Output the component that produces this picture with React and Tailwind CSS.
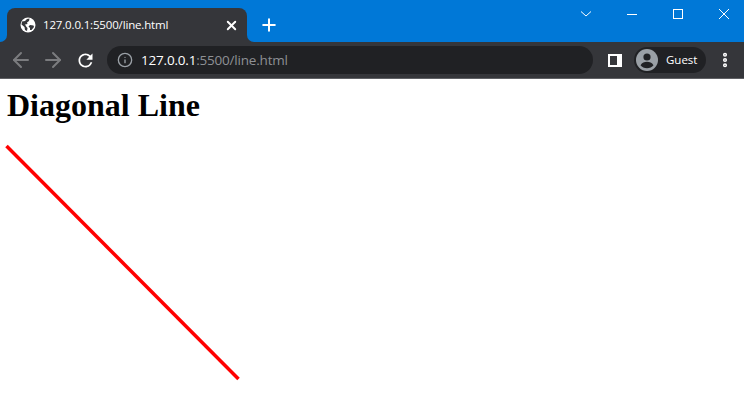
import React from "react";
import { ArrowLeft, ArrowRight, Info, Plus, X, EllipsisVertical } from "lucide-react";

const GlobeIcon = () => (
  <svg width="16" height="16" viewBox="0 0 16 16">
    <circle cx="8" cy="8" r="7.5" fill="#fff" />
    <path d="M2 4.5 L5 4 L7 2 L9.5 1.5 L9 4 L7 5.5 L7.5 7 L5 7.5 L6.5 10 L7.5 11 L7 14 L5 13 L4.5 10 L1.5 7.5 Z M10 8 L13.5 8.5 L14 10 L11.5 13 L10 13 L10 11 L8.5 9.5 Z" fill="#35363a" />
  </svg>
);

const ReloadIcon = () => (
  <svg className="ml-[10px]" width="21" height="21" viewBox="0 0 24 24" fill="#fff">
    <path d="M17.65 6.35A7.958 7.958 0 0 0 12 4c-4.42 0-7.99 3.58-7.99 8s3.57 8 7.99 8c3.73 0 6.84-2.55 7.73-6h-2.08A5.99 5.99 0 0 1 12 18c-3.31 0-6-2.69-6-6s2.69-6 6-6c1.66 0 3.14.69 4.22 1.78L13 11h7V4l-2.35 2.35z" />
  </svg>
);

const GuestAvatar = () => (
  <svg width="22" height="22" viewBox="0 0 22 22">
    <circle cx="11" cy="11" r="11" fill="#9aa0a6" />
    <circle cx="11" cy="8" r="3.6" fill="#202124" />
    <path d="M4.5 16.2 C6 13.4 8.5 12.8 11 12.8 C13.5 12.8 16 13.4 17.5 16.2 C16 18.2 13.6 19.2 11 19.2 C8.4 19.2 6 18.2 4.5 16.2 Z" fill="#202124" />
  </svg>
);

// window buttons, 46px wide like the real caption bar
const CaptionButton = ({ children }) => (
  <div className="w-[46px] h-[28px] flex items-center justify-center">
    <svg width="12" height="12" viewBox="0 0 12 12" fill="none" stroke="#fff" strokeWidth="1">
      {children}
    </svg>
  </div>
);

const App = () => {
  return (
    <div className="w-[744px] h-[419px] overflow-hidden bg-white font-['Roboto','Liberation_Sans',sans-serif]">
      {/* Tab strip */}
      <div className="h-[42px] bg-[#0078d7] flex items-end pl-[7px]">
        <div className="relative w-[240px] h-[34px] bg-[#35363a] rounded-t-lg flex items-center pl-[13px] pr-[8px]">
          {/* flared tab corners */}
          <div className="absolute -left-[7px] bottom-0 w-[7px] h-[7px] bg-[#35363a]">
            <div className="w-full h-full bg-[#0078d7] rounded-br-[7px]" />
          </div>
          <div className="absolute -right-[7px] bottom-0 w-[7px] h-[7px] bg-[#35363a]">
            <div className="w-full h-full bg-[#0078d7] rounded-bl-[7px]" />
          </div>
          <GlobeIcon />
          <span className="ml-[7px] text-[11.5px] text-white whitespace-nowrap font-['Open_Sans',sans-serif] tracking-[-0.16px]">127.0.0.1:5500/line.html</span>
          <X className="ml-auto text-white" size={15} strokeWidth={3} />
        </div>
        <div className="self-center mt-[8px] ml-[12px]">
          <Plus className="text-white" size={20} strokeWidth={2.4} />
        </div>
        <div className="ml-auto mr-[-3px] self-start flex items-center">
          <CaptionButton>
            <path d="M1 3.5 L6 8 L11 3.5" />
          </CaptionButton>
          <CaptionButton>
            <path d="M1 6.5 H11" />
          </CaptionButton>
          <CaptionButton>
            <rect x="1.5" y="1.5" width="9" height="9" />
          </CaptionButton>
          <CaptionButton>
            <path d="M1 1 L11 11 M11 1 L1 11" />
          </CaptionButton>
        </div>
      </div>

      {/* Toolbar */}
      <div className="h-[37px] bg-[#35363a] border-b border-[#5f6064] flex items-center pl-[9px]">
        <ArrowLeft className="text-[#7b7c7f]" size={24} strokeWidth={2} />
        <ArrowRight className="ml-[8px] text-[#7b7c7f]" size={24} strokeWidth={2} />
        <ReloadIcon />
        <div className="ml-[11px] w-[486px] h-[28px] rounded-full bg-[#202124] flex items-center pl-[10px]">
          <Info className="text-[#9aa0a6]" size={16} strokeWidth={2} />
          <span className="ml-[8px] text-[13.5px] text-white whitespace-nowrap font-['Open_Sans',sans-serif] tracking-[-0.2px]">
            127.0.0.1<span className="text-[#8e9094]">:5500/line.html</span>
          </span>
        </div>
        {/* side panel button */}
        <div className="ml-[15px] w-[14px] h-[13px] bg-white flex py-[2px] pl-[2px]">
          <div className="w-[7px] h-full bg-[#35363a]" />
        </div>
        <div className="ml-[12px] w-[72px] h-[26px] rounded-full bg-[#202124] flex items-center pl-[2px]">
          <GuestAvatar />
          <span className="ml-[8px] text-[11.5px] text-white font-['Open_Sans',sans-serif]">Guest</span>
        </div>
        <EllipsisVertical className="ml-[10px] text-white" size={18} strokeWidth={3.5} />
      </div>

      {/* Page */}
      <h1 className="mt-[8px] ml-[7px] text-[32px] leading-[37px] font-bold text-black font-['Liberation_Serif',serif]">Diagonal Line</h1>
      <svg className="block mt-[20px]" width="244" height="240" viewBox="0 0 244 240">
        <line x1="6.5" y1="2" x2="238.5" y2="235" stroke="#ff0000" strokeWidth="3.5" />
      </svg>
    </div>
  );
};

export default App;
